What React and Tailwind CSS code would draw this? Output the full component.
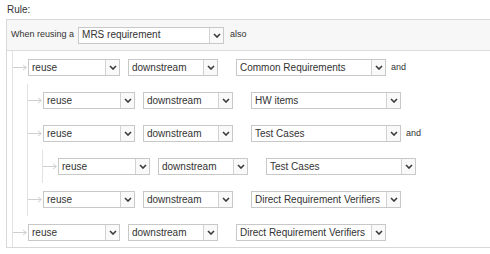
const font = { fontFamily: '"Liberation Sans", Arial, sans-serif' };

function Chevron() {
  return (
    <svg width="8" height="5" viewBox="0 0 8 5" className="block">
      <path d="M1 1 L4 4 L7 1" fill="none" stroke="#3a3a3a" strokeWidth="1.6" />
    </svg>
  );
}

function Select({ value, className }) {
  return (
    <div className={`flex h-[17px] shrink-0 items-stretch border border-[#c8c8c8] bg-white ${className}`}>
      <span className="flex flex-1 items-center overflow-hidden whitespace-nowrap pl-[3px] text-[10px] leading-none text-[#333]">
        {value}
      </span>
      <span className="flex w-[14px] items-center justify-center border-l border-[#d2d2d2] bg-[#f9f9f9]">
        <Chevron />
      </span>
    </div>
  );
}

function TreeArrow() {
  return (
    <svg width="15" height="7" viewBox="0 0 15 7" className="block shrink-0">
      <path d="M0 3.5 H13" stroke="#cfcfcf" strokeWidth="1" />
      <path d="M10 1 L13.5 3.5 L10 6" fill="none" stroke="#cfcfcf" strokeWidth="1" />
    </svg>
  );
}

function Row({ target, and, last }) {
  return (
    <div className={`flex items-center pt-2 ${last ? 'pb-[6px]' : 'pb-2'}`}>
      <TreeArrow />
      <Select value="reuse" className="w-[92px]" />
      <Select value="downstream" className="ml-2 w-[90px]" />
      <Select value={target} className="ml-[18px] w-[150px]" />
      {and && <span className="ml-[5px] text-[9px] text-[#333]">and</span>}
    </div>
  );
}

export default function App() {
  return (
    <div className="h-[254px] w-[490px] overflow-hidden bg-white pl-[6px] pt-[3px]" style={font}>
      <div className="pl-px text-[10px] leading-[13px] text-[#333]">Rule:</div>
      <div className="mt-[3px] w-[600px] border-y border-l border-[#d8d8d8]">
        <div className="flex h-[31px] items-center border-b border-[#dcdcdc] bg-[#f7f7f7] pl-1">
          <span className="text-[9px] text-[#333]">When reusing a</span>
          <Select value="MRS requirement" className="ml-1 w-[146px]" />
          <span className="ml-[6px] text-[9px] text-[#333]">also</span>
        </div>
        <div className="ml-[5px] border-l border-[#e2e2e2]">
          <Row target="Common Requirements" and />
          <div className="ml-[14px] border-l border-[#e2e2e2]">
            <Row target="HW items" />
            <Row target="Test Cases" and />
            <div className="ml-[14px] border-l border-[#e2e2e2]">
              <Row target="Test Cases" />
            </div>
            <Row target="Direct Requirement Verifiers" />
          </div>
          <Row target="Direct Requirement Verifiers" last />
        </div>
      </div>
    </div>
  );
}
